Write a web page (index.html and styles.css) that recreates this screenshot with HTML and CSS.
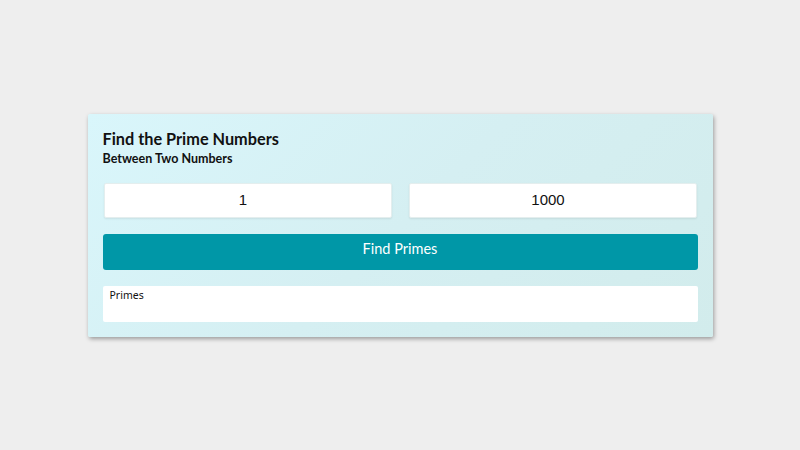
FILE: index.html
```html
<!DOCTYPE html>
<html>
<head>
<meta charset="utf-8">
<link rel="stylesheet" href="styles.css">
</head>
<body>
<div class="page">
  <div class="card">
    <h1 class="title">Find the Prime Numbers</h1>
    <h2 class="subtitle">Between Two Numbers</h2>
    <div class="inputs">
      <input class="num" type="text" value="1">
      <input class="num" type="text" value="1000">
    </div>
    <button class="btn">Find Primes</button>
    <div class="output">Primes</div>
  </div>
</div>
</body>
</html>
```
FILE: styles.css
```css
html, body {
  margin: 0;
  padding: 0;
  background: #eeeeee;
  width: 800px;
  height: 450px;
}
.page {
  height: 450px;
  display: flex;
  align-items: center;
  justify-content: center;
}
.card {
  width: 625px;
  box-sizing: border-box;
  padding: 14px 15px 15px 15px;
  background: linear-gradient(135deg, #d9f6fb 0%, #d5eff2 50%, #d2ecec 100%);
  box-shadow: 1px 2px 4px rgba(0,0,0,0.35);
  border-radius: 2px;
  display: flex;
  flex-direction: column;
  font-family: "Lato", sans-serif;
  color: #111;
}
.title {
  margin: 0;
  font-size: 16.3px;
  font-weight: 700;
  line-height: 22px;
}
.subtitle {
  margin: 0;
  font-size: 12.5px;
  font-weight: 700;
  line-height: 18px;
}
.inputs {
  display: flex;
  gap: 17px;
  margin-top: 15px;
  padding: 0 1px;
}
.num {
  flex: 1;
  min-width: 0;
  height: 35px;
  box-sizing: border-box;
  border: 1px solid #e4eeee;
  border-radius: 2px;
  background: #fff;
  text-align: center;
  padding: 0 10px 2px 1px;
  font-family: "Liberation Sans", Arial, sans-serif;
  font-size: 15px;
  color: #111;
  box-shadow: 0 1px 2px rgba(0,0,0,0.08);
}
.btn {
  margin-top: 16px;
  height: 36px;
  border: none;
  border-radius: 3px;
  background: #0097a7;
  color: #fff;
  padding: 0 0 6px 0;
  font-family: "Lato", sans-serif;
  font-size: 14.5px;
  font-weight: 400;
}
.output {
  margin-top: 16px;
  height: 36px;
  box-sizing: border-box;
  background: #fff;
  border-radius: 2px;
  padding: 2px 7px;
  font-family: "Noto Sans", sans-serif;
  font-size: 10.5px;
  line-height: 14px;
  color: #111;
}
```
